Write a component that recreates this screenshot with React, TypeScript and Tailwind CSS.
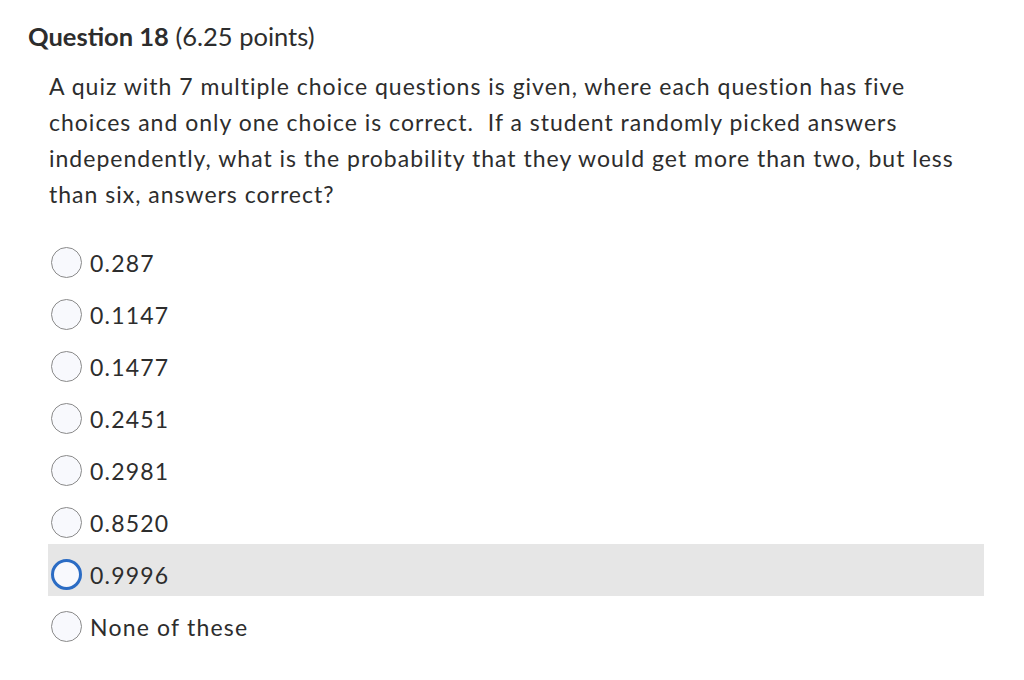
import React from 'react';

const options = ['0.287', '0.1147', '0.1477', '0.2451', '0.2981', '0.8520', '0.9996', 'None of these'];

const Radio: React.FC<{ selected?: boolean }> = ({ selected }) => (
    <span
        className={
            selected
                ? 'w-[31px] h-[31px] rounded-full border-[3px] border-[#2b6cc4] bg-[#f8f9fd] shrink-0'
                : 'w-[31px] h-[31px] rounded-full border border-[#8a8a8a] bg-[#f8f9fd] shrink-0'
        }
    />
);

export default function App() {
    const selectedIndex = 6;

    return (
        <div className="w-[1024px] h-[680px] bg-white text-[#2d2d2d] pl-[28px] pt-[18px]" style={{ fontFamily: 'Lato, "Open Sans", sans-serif' }}>
            <h1 className="text-[25.5px] leading-[36px]">
                <span className="font-bold">Question 18</span> <span>(6.25 points)</span>
            </h1>

            <div className="ml-[20px] w-[936px]">
                <p className="mt-[14px] w-[915px] text-[23px] leading-[36px] tracking-[1px] pl-[1px]">
                    A quiz with 7 multiple choice questions is given, where each question has five choices and only one choice is correct.&nbsp; If a student randomly picked answers independently, what is the probability that they would get more than two, but less than six, answers correct?
                </p>

                <div className="mt-[20px] flex flex-col">
                    {options.map((opt, i) => (
                        <div
                            key={opt}
                            className={
                                'h-[52px] flex items-center gap-[8px] pl-[3px] pt-[9px] ' +
                                (i === selectedIndex ? 'bg-[#e6e6e6]' : '')
                            }
                        >
                            <Radio selected={i === selectedIndex} />
                            <span className="text-[23px] leading-[30px] tracking-[1.2px]">{opt}</span>
                        </div>
                    ))}
                </div>
            </div>
        </div>
    );
}
